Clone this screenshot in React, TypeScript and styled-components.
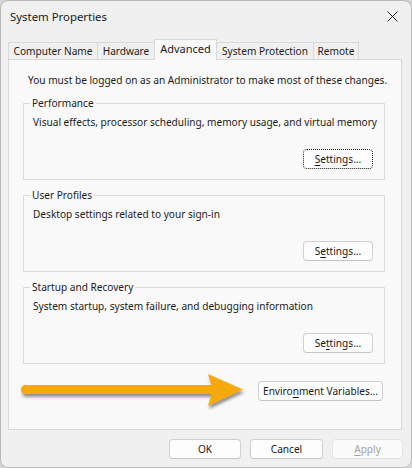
import React from "react";
import styled, { createGlobalStyle, css } from "styled-components";

const GlobalStyle = createGlobalStyle`
  html, body {
    margin: 0;
    padding: 0;
    background: #d4d4d4;
  }
  body {
    font-family: "Noto Sans", "Liberation Sans", sans-serif;
    font-size: 10.1px;
    color: #1b1b1b;
  }
`;

const Window = styled.div`
  width: 412px;
  height: 468px;
  box-sizing: border-box;
  background: #f0f0f0;
  border-radius: 8px;
  border: 1px solid #b8b8b8;
  display: flex;
  flex-direction: column;
  overflow: hidden;
`;

const TitleBar = styled.div`
  height: 31px;
  display: flex;
  align-items: center;
  justify-content: space-between;
  padding: 0 9px 0 9px;
  flex-shrink: 0;
  h1 {
    margin: 0;
    font-size: 11.4px;
    font-weight: 400;
    color: #1a1a1a;
  }
`;

const CloseButton = styled.button`
  width: 20px;
  height: 20px;
  padding: 0;
  border: none;
  background: none;
  display: flex;
  align-items: center;
  justify-content: center;
`;

const TabStrip = styled.div`
  display: flex;
  align-items: flex-end;
  height: 27px;
  padding-left: 7px;
  position: relative;
  z-index: 1;
`;

const Tab = styled.div<{ $width: number; $active?: boolean }>`
  width: ${(p) => p.$width}px;
  height: 17px;
  line-height: 16px;
  text-align: center;
  box-sizing: border-box;
  border: 1px solid #d9d9d9;
  border-bottom: none;
  border-right: none;
  background: #f0f0f0;
  white-space: nowrap;
  &:nth-last-child(1) {
    border-right: 1px solid #d9d9d9;
  }
  ${(p) =>
    p.$active &&
    css`
      height: 21px;
      line-height: 16px;
      padding-top: 1px;
      background: #f9f9f9;
      border-right: 1px solid #d9d9d9;
      margin-bottom: -1px;
      font-size: 11px;
      & + div {
        border-left: none;
      }
    `}
`;

const Panel = styled.div`
  margin: 0 9px 0 7px;
  height: 371px;
  box-sizing: border-box;
  background: #f9f9f9;
  border: 1px solid #d9d9d9;
  padding: 12px 16px 0 14px;
  display: flex;
  flex-direction: column;
`;

const Intro = styled.p`
  margin: 0 0 0 5px;
  line-height: 16px;
  white-space: nowrap;
`;

const Group = styled.fieldset`
  margin: 8px 0 0 0;
  min-width: 0;
  padding: 0 10px 10px 9px;
  border: 1px solid #dcdcdc;
  & + & {
    margin-top: 8px;
  }
  legend {
    margin-left: -3px;
    padding: 0 2px;
    line-height: 14px;
  }
  p {
    margin: 4px 0 0 0;
    line-height: 16px;
    white-space: nowrap;
  }
`;

const GroupFooter = styled.div`
  margin-top: 19px;
  display: flex;
  justify-content: flex-end;
  padding-right: 1px;
`;

const Button = styled.button<{ $width: number; $focused?: boolean }>`
  width: ${(p) => p.$width}px;
  height: 20px;
  padding: 0;
  box-sizing: border-box;
  font-family: inherit;
  font-size: 10.1px;
  color: #1b1b1b;
  background: #fdfdfd;
  border: 1px solid #d0d0d0;
  border-bottom-color: #c4c4c4;
  border-radius: 4px;
  line-height: 16px;
  white-space: nowrap;
  display: block;
  u {
    text-decoration-thickness: 1px;
    text-underline-offset: 2px;
  }
  ${(p) =>
    p.$focused &&
    css`
      border: 1px dotted #1a1a1a;
    `}
  &:disabled {
    color: #a3a3a3;
    background: #fbfbfb;
    border-color: #e3e3e3;
  }
`;

const EnvRow = styled.div`
  margin: 6px 2px 0 -3px;
  display: flex;
  align-items: center;
  justify-content: space-between;
`;

const DialogButtons = styled.div`
  display: flex;
  justify-content: flex-end;
  gap: 9px;
  padding: 9px 8px 0 0;
`;

const Arrow = () => (
  <svg width="226" height="42" viewBox="0 0 226 42">
    <defs>
      <filter id="sh" x="-10%" y="-30%" width="120%" height="170%">
        <feDropShadow dx="1" dy="3" stdDeviation="1.4" floodColor="#3a3a3a" floodOpacity="0.55" />
      </filter>
    </defs>
    <g filter="url(#sh)" fill="#f5a90e">
      <rect x="1" y="15" width="196" height="9" rx="4.5" />
      <path d="M188 4 L223 19.5 L188 36 L193 19.5 Z" />
    </g>
  </svg>
);

const groups = [
  {
    title: "Performance",
    text: "Visual effects, processor scheduling, memory usage, and virtual memory",
    key: 0,
    focused: true,
  },
  {
    title: "User Profiles",
    text: "Desktop settings related to your sign-in",
    key: 1,
  },
  {
    title: "Startup and Recovery",
    text: "System startup, system failure, and debugging information",
    key: 2,
  },
];

const tabs = [
  { label: "Computer Name", width: 89 },
  { label: "Hardware", width: 57 },
  { label: "Advanced", width: 63, active: true },
  { label: "System Protection", width: 96 },
  { label: "Remote", width: 46 },
];

const settingsLabel = (i: number) => {
  const word = "Settings";
  return (
    <>
      {word.slice(0, i)}
      <u>{word[i]}</u>
      {word.slice(i + 1)}...
    </>
  );
};

const App = () => {
  return (
    <>
      <GlobalStyle />
      <Window>
        <TitleBar>
          <h1>System Properties</h1>
          <CloseButton aria-label="Close">
            <svg width="11" height="11" viewBox="0 0 11 11">
              <path d="M0.5 0.5 L10.5 10.5 M10.5 0.5 L0.5 10.5" stroke="#222" strokeWidth="1" />
            </svg>
          </CloseButton>
        </TitleBar>
        <TabStrip>
          {tabs.map((t) => (
            <Tab key={t.label} $width={t.width} $active={t.active}>
              {t.label}
            </Tab>
          ))}
        </TabStrip>
        <Panel>
          <Intro>You must be logged on as an Administrator to make most of these changes.</Intro>
          {groups.map((g) => (
            <Group key={g.title}>
              <legend>{g.title}</legend>
              <p>{g.text}</p>
              <GroupFooter>
                <Button $width={70} $focused={g.focused}>
                  {settingsLabel(g.key)}
                </Button>
              </GroupFooter>
            </Group>
          ))}
          <EnvRow>
            <Arrow />
            <Button $width={125}>
              Enviro<u>n</u>ment Variables...
            </Button>
          </EnvRow>
        </Panel>
        <DialogButtons>
          <Button $width={72}>OK</Button>
          <Button $width={73}>Cancel</Button>
          <Button $width={71} disabled>
            <u>A</u>pply
          </Button>
        </DialogButtons>
      </Window>
    </>
  );
};

export default App;
